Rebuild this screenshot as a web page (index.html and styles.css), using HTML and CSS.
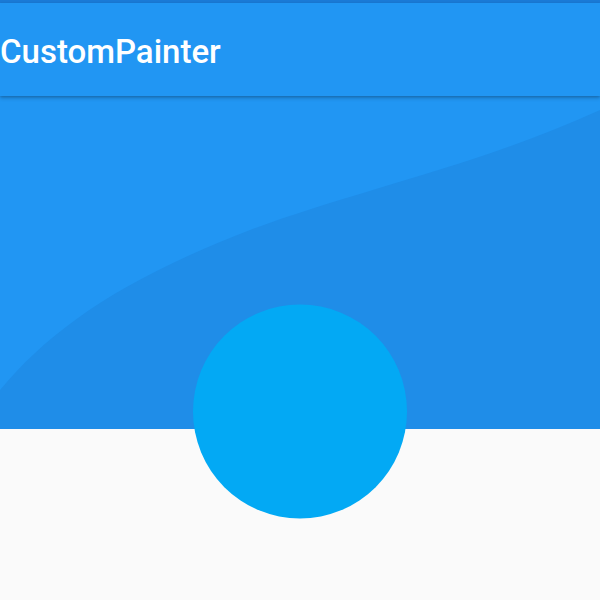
FILE: index.html
```html
<!DOCTYPE html>
<html>
<head>
<meta charset="utf-8">
<link rel="stylesheet" href="styles.css">
</head>
<body>
<div class="status"></div>
<header class="appbar"><h1 class="title">CustomPainter</h1></header>
<main class="canvas">
  <svg class="paint" width="600" height="333" viewBox="0 96 600 333" xmlns="http://www.w3.org/2000/svg">
    <rect x="0" y="96" width="600" height="333" fill="#2196F3"/>
    <path d="M0 390 C50 330 120 280 250 230 C350 192 480 165 600 110 L600 429 L0 429 Z" fill="#1F8DE8"/>
    <circle cx="300" cy="411.5" r="107" fill="#03A9F4"/>
  </svg>
</main>
</body>
</html>
```
FILE: styles.css
```css
html, body {
  margin: 0;
  padding: 0;
  background: #FAFAFA;
  width: 600px;
  height: 600px;
  overflow: hidden;
}
.status {
  height: 3px;
  background: #1A7AD6;
}
.appbar {
  position: relative;
  z-index: 2;
  height: 93px;
  background: #2196F3;
  display: flex;
  align-items: center;
  box-shadow: 0 2px 4px rgba(0,0,0,0.22), 0 1px 2px rgba(0,0,0,0.12);
}
.title {
  margin: 0;
  padding-top: 3px;
  font-family: Roboto, "Noto Sans", sans-serif;
  font-weight: 500;
  font-size: 33px;
  color: #FFFFFF;
  letter-spacing: 0;
}
.canvas {
  position: relative;
  z-index: 1;
  height: 333px;
}
.paint {
  display: block;
  overflow: visible;
}
```
